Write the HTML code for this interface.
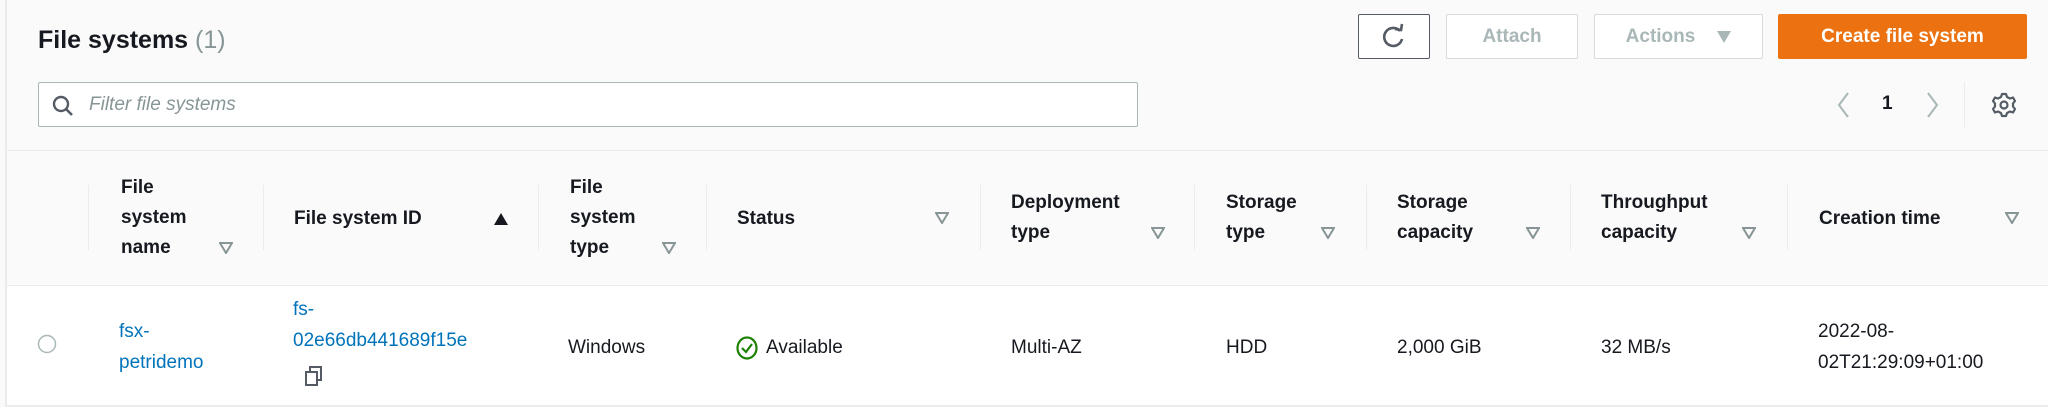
<!DOCTYPE html>
<html><head><meta charset="utf-8"><style>
*{margin:0;padding:0;box-sizing:border-box}
body{width:2048px;height:407px;overflow:hidden;background:#fafafa;font-family:"Liberation Sans",Arial,sans-serif;color:#16191f;position:relative}
.a{position:absolute;white-space:nowrap}
.btn{position:absolute;top:14px;height:45px;border:1px solid #d5dbdb;background:#fff;border-radius:2px;font-weight:bold;font-size:19px;color:#aab7b8;display:flex;align-items:center;justify-content:center}
.h{position:absolute;font-weight:bold;font-size:19px;line-height:30px;color:#16191f}
.div{position:absolute;top:185px;height:65px;width:1px;background:#eaeded}
.f{position:absolute;width:14px;height:12px}
.d{position:absolute;font-size:19px;line-height:31px;color:#16191f;white-space:nowrap}
.lnk{color:#0073bb}
</style></head><body>
<div class="a" style="left:5px;top:0;width:2px;height:407px;background:#e9ebed"></div>
<div class="a" style="left:38px;top:26px;font-size:25px;font-weight:bold;">File systems <span style="color:#879596;font-weight:normal">(1)</span></div>

<div class="btn" style="left:1358px;width:72px;border-color:#545b64;"><svg width="26" height="28" viewBox="0 0 26 28"><path d="M19 8 A9 9 0 1 0 21 16" fill="none" stroke="#545b64" stroke-width="2.6"/><path d="M14 6 L20 7 L21 1" fill="none" stroke="#545b64" stroke-width="2.6"/></svg></div>
<div class="btn" style="left:1446px;width:132px;">Attach</div>
<div class="btn" style="left:1594px;width:169px;">Actions<svg style="margin-left:22px" width="14" height="12"><path d="M0 0 H14 L7 12Z" fill="#aab7b8"/></svg></div>
<div class="btn" style="left:1778px;width:249px;background:#ec7211;border-color:#ec7211;color:#fff">Create file system</div>

<div class="a" style="left:38px;top:82px;width:1100px;height:45px;background:#fff;border:1px solid #aab7b8;border-radius:2px"></div>
<svg class="a" style="left:52px;top:95px" width="22" height="22"><circle cx="9" cy="9" r="7" fill="none" stroke="#545b64" stroke-width="2.4"/><path d="M14 14 L20 20" stroke="#545b64" stroke-width="2.6"/></svg>
<div class="a" style="left:89px;top:94px;font-size:19px;font-style:italic;color:#879596">Filter file systems</div>

<svg class="a" style="left:1836px;top:92px" width="14" height="26"><path d="M12 1 L3 13 L12 25" fill="none" stroke="#aab7b8" stroke-width="2"/></svg>
<div class="a" style="left:1882px;top:93px;font-size:19px;font-weight:bold">1</div>
<svg class="a" style="left:1926px;top:92px" width="14" height="26"><path d="M2 1 L11 13 L2 25" fill="none" stroke="#aab7b8" stroke-width="2"/></svg>
<div class="a" style="left:1964px;top:82px;width:1px;height:45px;background:#eaeded"></div>
<svg class="a" style="left:1991px;top:92px" width="26" height="26" viewBox="0 0 26 26"><path d="M11 2h4l1 3 3 1.5 3-1 2 3.5-2 2.5v3l2 2.5-2 3.5-3-1-3 1.5-1 3h-4l-1-3-3-1.5-3 1-2-3.5 2-2.5v-3l-2-2.5 2-3.5 3 1 3-1.5z" fill="none" stroke="#545b64" stroke-width="2.2" stroke-linejoin="round"/><circle cx="13" cy="13" r="3.5" fill="none" stroke="#545b64" stroke-width="2.2"/></svg>

<div class="a" style="left:7px;top:150px;width:2041px;height:1px;background:#eaeded"></div>
<div class="a" style="left:7px;top:285px;width:2041px;height:122px;background:#fff;border-top:1px solid #eaeded;border-bottom:2px solid #eaeded"></div>

<div class="div" style="left:88px"></div><div class="div" style="left:263px"></div><div class="div" style="left:538px"></div><div class="div" style="left:706px"></div><div class="div" style="left:980px"></div><div class="div" style="left:1194px"></div><div class="div" style="left:1366px"></div><div class="div" style="left:1570px"></div><div class="div" style="left:1787px"></div>

<div class="h" style="left:121px;top:173px">File<br>system<br>name</div>
<div class="h" style="left:294px;top:204px">File system ID</div>
<svg class="f" style="left:494px;top:213px"><path d="M0 12 L7 0 L14 12Z" fill="#16191f"/></svg>
<div class="h" style="left:570px;top:173px">File<br>system<br>type</div>
<div class="h" style="left:737px;top:204px">Status</div>
<div class="h" style="left:1011px;top:188px">Deployment<br>type</div>
<div class="h" style="left:1226px;top:188px">Storage<br>type</div>
<div class="h" style="left:1397px;top:188px">Storage<br>capacity</div>
<div class="h" style="left:1601px;top:188px">Throughput<br>capacity</div>
<div class="h" style="left:1819px;top:204px">Creation time</div>

<svg class="f" style="left:219px;top:242px"><path d="M1 1 H13 L7 11Z" fill="none" stroke="#879596" stroke-width="2"/></svg>
<svg class="f" style="left:662px;top:242px"><path d="M1 1 H13 L7 11Z" fill="none" stroke="#879596" stroke-width="2"/></svg>
<svg class="f" style="left:935px;top:212px"><path d="M1 1 H13 L7 11Z" fill="none" stroke="#879596" stroke-width="2"/></svg>
<svg class="f" style="left:1151px;top:227px"><path d="M1 1 H13 L7 11Z" fill="none" stroke="#879596" stroke-width="2"/></svg>
<svg class="f" style="left:1321px;top:227px"><path d="M1 1 H13 L7 11Z" fill="none" stroke="#879596" stroke-width="2"/></svg>
<svg class="f" style="left:1526px;top:227px"><path d="M1 1 H13 L7 11Z" fill="none" stroke="#879596" stroke-width="2"/></svg>
<svg class="f" style="left:1742px;top:227px"><path d="M1 1 H13 L7 11Z" fill="none" stroke="#879596" stroke-width="2"/></svg>
<svg class="f" style="left:2005px;top:212px"><path d="M1 1 H13 L7 11Z" fill="none" stroke="#879596" stroke-width="2"/></svg>

<svg class="a" style="left:37px;top:334px" width="20" height="20"><circle cx="10" cy="10" r="8.5" fill="#fff" stroke="#aab7b8" stroke-width="1.5"/></svg>
<div class="d lnk" style="left:119px;top:316px">fsx-<br>petridemo</div>
<div class="d lnk" style="left:293px;top:294px">fs-<br>02e66db441689f15e</div>
<svg class="a" style="left:304px;top:365px" width="20" height="22"><rect x="6" y="2" width="11" height="13" fill="none" stroke="#545b64" stroke-width="2"/><rect x="2" y="7" width="11" height="13" fill="#fff" stroke="#545b64" stroke-width="2"/></svg>
<div class="d" style="left:568px;top:332px">Windows</div>
<svg class="a" style="left:736px;top:336px" width="22" height="24"><ellipse cx="11" cy="12" rx="9.5" ry="10.5" fill="none" stroke="#1d8102" stroke-width="2.2"/><path d="M6 12 L10 16 L16 8" fill="none" stroke="#1d8102" stroke-width="2.2"/></svg>
<div class="d" style="left:766px;top:332px">Available</div>
<div class="d" style="left:1011px;top:332px">Multi-AZ</div>
<div class="d" style="left:1226px;top:332px">HDD</div>
<div class="d" style="left:1397px;top:332px">2,000 GiB</div>
<div class="d" style="left:1601px;top:332px">32 MB/s</div>
<div class="d" style="left:1818px;top:316px">2022-08-<br>02T21:29:09+01:00</div>
</body></html>
